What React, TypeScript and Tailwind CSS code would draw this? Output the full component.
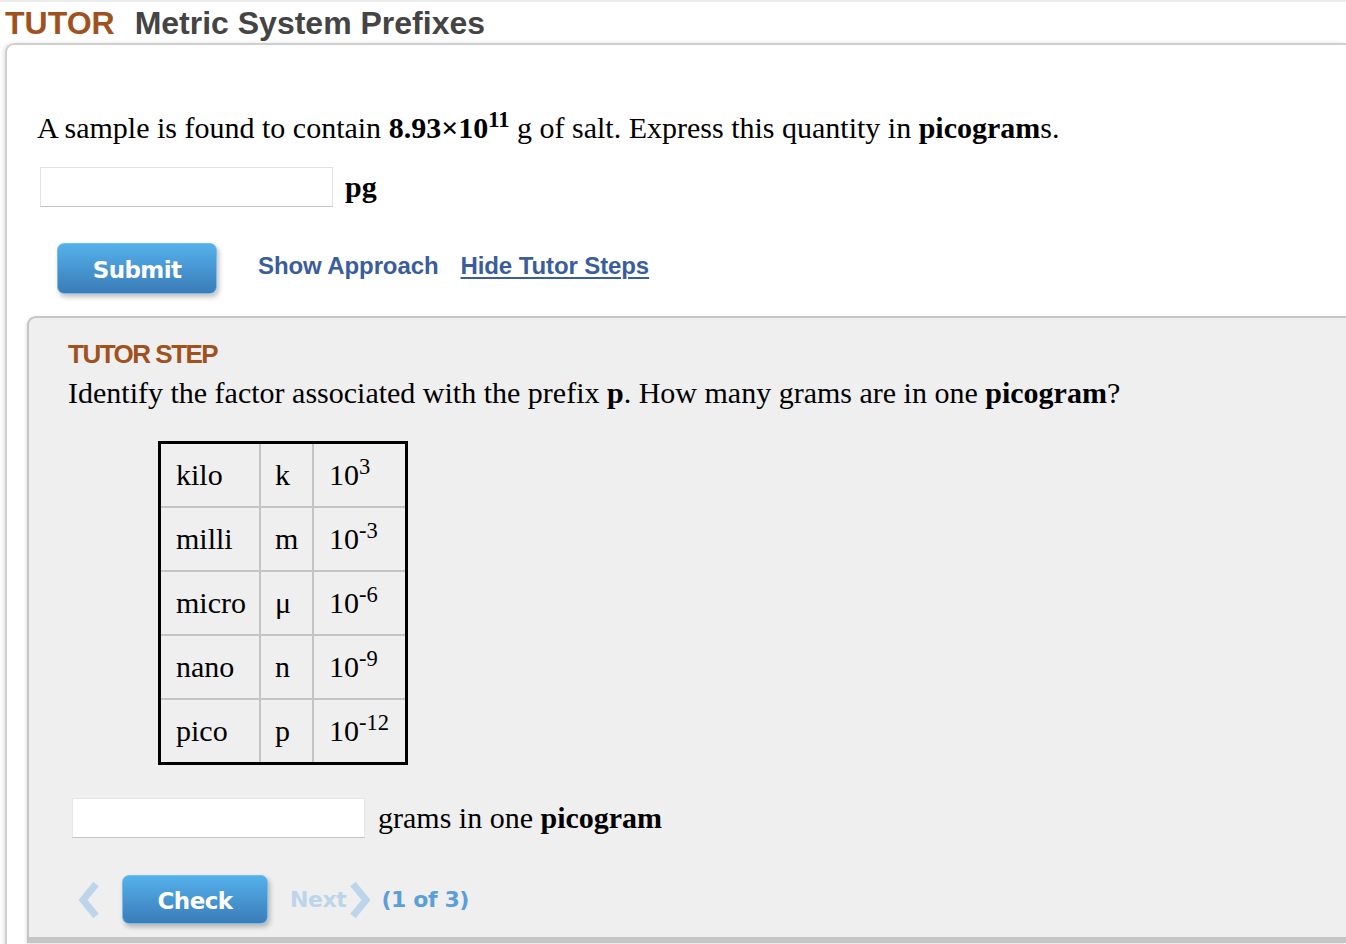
import React from 'react'

// Metric prefix table rows
const rows: [string, string, string][] = [
  ['kilo', 'k', '3'],
  ['milli', 'm', '-3'],
  ['micro', 'μ', '-6'],
  ['nano', 'n', '-9'],
  ['pico', 'p', '-12'],
]

const serif = "font-['Liberation_Serif',_'Times_New_Roman',_serif]"

function Chevron({ dir, className }: { dir: 'left' | 'right'; className?: string }) {
  const pts = dir === 'left' ? '19,4 6,20 19,36' : '5,4 18,20 5,36'
  return (
    <svg width="24" height="40" viewBox="0 0 24 40" className={className}>
      <polyline points={pts} fill="none" stroke="#bcd5ea" strokeWidth="7" strokeLinejoin="miter" strokeLinecap="butt" />
    </svg>
  )
}

function BlueButton({ label, className }: { label: string; className: string }) {
  return (
    <button
      className={
        'rounded-[7px] border border-[#74bdec] bg-gradient-to-b from-[#55b1eb] to-[#3a7cb8] text-white font-bold text-[23px] tracking-[-0.6px] leading-none pt-[4px] font-["DejaVu_Sans",_Verdana,_sans-serif] shadow-[2px_3px_5px_rgba(0,0,0,0.25)] flex items-center justify-center ' +
        className
      }
    >
      {label}
    </button>
  )
}

export default function App() {
  return (
    <div className="w-[1346px] h-[944px] overflow-hidden bg-white font-['Liberation_Sans',_Arial,_sans-serif]">
      <div className="h-[2px] bg-[#ececec]" />

      {/* header */}
      <div className="h-[41px] pl-[5px] pt-[5px] flex items-start text-[32px] font-bold leading-none">
        <span className="text-[#a0521e]">TUTOR</span>
        <span className="ml-[20px] text-[#444]">Metric System Prefixes</span>
      </div>

      {/* outer panel */}
      <div className="ml-[5px] h-[920px] border-l-2 border-t-2 border-[#cfcfcf] rounded-tl-[9px] shadow-[-2px_0_4px_rgba(0,0,0,0.10)] pl-[20px] pt-[65px]">
        <div className="pl-[10px]">
          <p className={serif + ' text-[30px] leading-[36px] text-black'}>
            A sample is found to contain <b>8.93×10<sup>11</sup></b> g of salt. Express this quantity in <b>picogram</b>s.
          </p>
          <div className="mt-[21px] ml-[3px] flex items-center">
            <div className="w-[293px] h-[40px] bg-white border border-[#e2e2e2] border-b-[#c4c4c4]" />
            <span className={serif + ' ml-[12px] text-[30px] leading-[36px] font-bold'}>pg</span>
          </div>
          <div className="mt-[36px] ml-[20px] flex items-start">
            <BlueButton label="Submit" className="w-[160px] h-[51px]" />
            <div className="mt-[11px] ml-[41px] flex gap-[22px] text-[24px] tracking-[-0.1px] font-bold leading-none text-[#3a5d9c]">
              <span>Show Approach</span>
              <span className="underline underline-offset-[3px] decoration-2">Hide Tutor Steps</span>
            </div>
          </div>
        </div>

        {/* tutor step panel */}
        <div className="mt-[22px] h-[627px] bg-[#efefef] border-l-2 border-t-2 border-b-[6px] border-[#c6c6c6] rounded-tl-[9px] shadow-[-1px_1px_3px_rgba(0,0,0,0.12)] pl-[39px] pt-[23px]">
          <div className="text-[26px] leading-none font-bold tracking-[-1.5px] text-[#a0521e]">TUTOR STEP</div>
          <p className={serif + ' mt-[8px] text-[30px] leading-[36px] text-black'}>
            Identify the factor associated with the prefix <b>p</b>. How many grams are in one <b>picogram</b>?
          </p>

          <div className={serif + ' mt-[30px] ml-[90px] w-[250px] border-[3px] border-black grid grid-cols-[100px_53px_91px] text-[30px] leading-[36px] text-black'}>
            {rows.map(([name, sym, exp], i) => {
              const last = i === rows.length - 1
              const rb = last ? 'h-[62px]' : 'h-[64px] border-b-2'
              return (
                <React.Fragment key={name}>
                  <div className={'flex items-center pl-[15px] border-r-2 border-[#c4c4c4] ' + rb}>{name}</div>
                  <div className={'flex items-center pl-[14px] border-r-2 border-[#c4c4c4] ' + rb}>{sym}</div>
                  <div className={'flex items-center pl-[15px] border-[#c4c4c4] ' + rb}>
                    <span>
                      10<sup>{exp}</sup>
                    </span>
                  </div>
                </React.Fragment>
              )
            })}
          </div>

          <div className="mt-[33px] ml-[4px] flex items-center">
            <div className="w-[293px] h-[40px] bg-white border border-[#e6e6e6] border-b-[#c4c4c4]" />
            <span className={serif + ' ml-[13px] text-[30px] leading-[36px] text-black'}>
              grams in one <b>picogram</b>
            </span>
          </div>

          <div className="mt-[37px] ml-[9px] flex items-center font-['DejaVu_Sans',_Verdana,_sans-serif] font-bold text-[22px] tracking-[-0.4px]">
            <Chevron dir="left" />
            <BlueButton label="Check" className="ml-[21px] w-[146px] h-[49px]" />
            <span className="ml-[22px] text-[#bcd5ea]">Next</span>
            <Chevron dir="right" className="ml-[2px]" />
            <span className="ml-[9px] text-[#5a9fd8]">(1 of 3)</span>
          </div>
        </div>
      </div>
    </div>
  )
}
